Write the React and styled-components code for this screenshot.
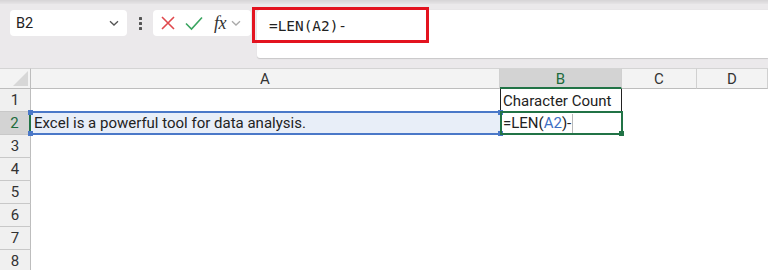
import React from "react";
import styled, { createGlobalStyle } from "styled-components";

const Global = createGlobalStyle`
  html, body { margin: 0; padding: 0; }
  body {
    width: 768px; height: 270px; overflow: hidden;
    background: #ebe9eb;
    font-family: Roboto, "Noto Sans", sans-serif;
  }
`;

const Page = styled.div`
  display: flex;
  flex-direction: column;
  width: 768px;
  height: 270px;
  overflow: hidden;
  & > * { flex-shrink: 0; }
`;

const TopEdge = styled.div`
  height: 4px;
  background: linear-gradient(#d6d4d6, #e6e4e6);
`;

const Toolbar = styled.div`
  display: flex;
  align-items: flex-start;
  padding: 6px 0 0 10px;
  height: 54px;
  box-sizing: border-box;
`;

const NameBox = styled.div`
  width: 117px;
  height: 26px;
  background: #fff;
  border-radius: 4px;
  box-sizing: border-box;
  display: flex;
  align-items: center;
  justify-content: space-between;
  padding: 0 7px 0 6px;
  font-size: 14.5px;
  color: #222;
`;

const Dots = styled.div`
  width: 26px;
  height: 26px;
  display: flex;
  flex-direction: column;
  align-items: center;
  justify-content: center;
  gap: 2px;
  span {
    width: 3px;
    height: 3px;
    background: #555;
    border-radius: 0.5px;
  }
`;

const FxGroup = styled.div`
  width: 98px;
  height: 26px;
  background: #fff;
  border-radius: 4px;
  display: flex;
  align-items: center;
  padding-left: 7px;
  box-sizing: border-box;
`;

const FxText = styled.span`
  font-family: "Liberation Serif", "DejaVu Serif", serif;
  font-style: italic;
  font-size: 18px;
  color: #333;
  margin-left: 10px;
  letter-spacing: -0.5px;
`;

const FxChevron = styled.span`
  margin-left: 4px;
  display: flex;
`;

const FormulaWrap = styled.div`
  position: relative;
  flex: 1;
  margin-left: 6px;
  height: 48px;
  background: #fff;
  border-radius: 3px 0 0 3px;
  box-shadow: 0 0.5px 1px rgba(0,0,0,0.15);
`;

const FormulaText = styled.div`
  padding: 6px 0 0 12px;
  font-family: "DejaVu Sans Mono", monospace;
  font-size: 14.4px;
  color: #222;
  line-height: 20px;
`;

const RedBox = styled.div`
  position: absolute;
  left: -5px;
  top: -3px;
  width: 177px;
  height: 36px;
  border: 3px solid #e3131f;
  box-sizing: border-box;
`;

const Spacer = styled.div`
  height: 10px;
`;

const Sheet = styled.div`
  display: grid;
  grid-template-columns: 31px 469px 122px 75px 1fr;
  grid-template-rows: 21px repeat(8, 23px);
  background: #fff;
`;

const Corner = styled.div`
  background: #f3f3f3;
  border-top: 1px solid #d4d4d4;
  border-bottom: 1px solid #bdbdbd;
  border-right: 1px solid #bdbdbd;
  box-sizing: border-box;
  position: relative;
  &::after {
    content: "";
    position: absolute;
    right: 2px;
    bottom: 2px;
    width: 0;
    height: 0;
    border-left: 15px solid transparent;
    border-bottom: 15px solid #d7d7d7;
  }
`;

const ColHead = styled.div`
  background: ${p => (p.$sel ? "#d3d3d3" : "#f3f3f3")};
  color: ${p => (p.$sel ? "#1d6b3c" : "#333")};
  border-top: 1px solid #d4d4d4;
  border-right: 1px solid #d0d0d0;
  border-bottom: ${p => (p.$sel ? "2px solid #217346" : "1px solid #bdbdbd")};
  box-sizing: border-box;
  display: flex;
  align-items: center;
  justify-content: center;
  font-size: 15px;
  padding-top: 1px;
`;

const RowHead = styled.div`
  background: ${p => (p.$sel ? "#d3d3d3" : "#f0f0f0")};
  color: ${p => (p.$sel ? "#1d6b3c" : "#333")};
  border-bottom: 1px solid #c8c8c8;
  border-right: ${p => (p.$sel ? "2px solid #217346" : "1px solid #bdbdbd")};
  box-sizing: border-box;
  display: flex;
  align-items: center;
  justify-content: center;
  font-size: 15px;
`;

const Cell = styled.div`
  position: relative;
  box-sizing: border-box;
  display: flex;
  align-items: center;
  padding-left: 3px;
  font-size: 15px;
  color: #222;
  white-space: nowrap;
`;

const BorderedCell = styled(Cell)`
  border-left: 1px solid #222;
  border-right: 1px solid #222;
  padding-left: 2px;
  padding-top: 1px;
`;

const RangeCell = styled(Cell)`
  background: #e8eef8;
  border-top: 2px solid #4a78c8;
  border-bottom: 2px solid #4a78c8;
  margin-top: -1px;
`;

const ActiveCell = styled(Cell)`
  border: 2px solid #217346;
  margin-top: -1px;
  margin-right: -1px;
  padding-left: 1px;
`;

const Handle = styled.span`
  position: absolute;
  width: 5px;
  height: 5px;
  background: ${p => p.$c};
  ${p => (p.$top ? "top: -3px;" : "bottom: -3px;")}
  ${p => (p.$left ? "left: -3px;" : "right: -3px;")}
`;

const Ref = styled.span`
  color: #3d6fc4;
`;

const Caret = styled.span`
  display: inline-block;
  width: 1px;
  height: 19px;
  background: #b8b8b8;
  margin-left: 1px;
`;

const Chevron = ({ color = "#555", size = 12 }) => (
  <svg width={size} height={size} viewBox="0 0 12 12">
    <path d="M2 4.2 L6 8 L10 4.2" fill="none" stroke={color} strokeWidth="1.3" />
  </svg>
);

const Cross = () => (
  <svg width="16" height="16" viewBox="0 0 16 16">
    <path d="M2 2 L14 14 M14 2 L2 14" stroke="#e0484d" strokeWidth="1.6" fill="none" />
  </svg>
);

const CheckSvg = styled.svg`
  margin-left: 8px;
`;

const Check = () => (
  <CheckSvg width="20" height="16" viewBox="0 0 20 16">
    <path d="M2 8.5 L7.5 14 L18 2.5" stroke="#3aa560" strokeWidth="1.6" fill="none" />
  </CheckSvg>
);

export default function App() {
  const rows = [1, 2, 3, 4, 5, 6, 7, 8];
  return (
    <>
      <Global />
      <Page>
        <TopEdge />
        <Toolbar>
          <NameBox>
            <span>B2</span>
            <Chevron />
          </NameBox>
          <Dots>
            <span />
            <span />
            <span />
          </Dots>
          <FxGroup>
            <Cross />
            <Check />
            <FxText>fx</FxText>
            <FxChevron>
              <Chevron color="#aaa" size={12} />
            </FxChevron>
          </FxGroup>
          <FormulaWrap>
            <FormulaText>=LEN(A2)-</FormulaText>
            <RedBox />
          </FormulaWrap>
        </Toolbar>
        <Spacer />
        <Sheet>
          <Corner />
          <ColHead>A</ColHead>
          <ColHead $sel>B</ColHead>
          <ColHead>C</ColHead>
          <ColHead>D</ColHead>
          {rows.map(r => (
            <React.Fragment key={r}>
              <RowHead $sel={r === 2}>{r}</RowHead>
              {r === 1 ? (
                <>
                  <Cell />
                  <BorderedCell>Character Count</BorderedCell>
                  <Cell />
                  <Cell />
                </>
              ) : r === 2 ? (
                <>
                  <RangeCell>
                    Excel is a powerful tool for data analysis.
                    <Handle $c="#4a78c8" $top $left />
                    <Handle $c="#4a78c8" $left />
                    <Handle $c="#4a78c8" $top />
                    <Handle $c="#4a78c8" />
                  </RangeCell>
                  <ActiveCell>
                    =LEN(<Ref>A2</Ref>)-
                    <Caret />
                    <Handle $c="#217346" />
                  </ActiveCell>
                  <Cell />
                  <Cell />
                </>
              ) : (
                <>
                  <Cell />
                  <Cell />
                  <Cell />
                  <Cell />
                </>
              )}
            </React.Fragment>
          ))}
        </Sheet>
      </Page>
    </>
  );
}
